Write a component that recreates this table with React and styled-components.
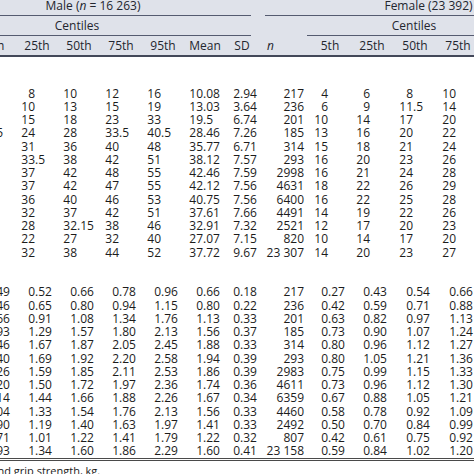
import React from "react"
import styled, { createGlobalStyle } from "styled-components"

// label | male n, 5th..95th, mean, sd | gap | female n, 5th..95th, mean, sd
const COLS =
	"100px 37px 42px 42px 42px 42px 42px 37px 32px 14px 42px 42px 43px 43px 43px 43px 38px 33px"

const ages = ["4", "5", "6", "7", "8", "9", "10", "11", "12", "13", "14", "15", "All"]

const absolute = [
	["5", "8", "10", "12", "16", "10.08", "2.94", "217", "4", "6", "8", "10"],
	["7", "10", "13", "15", "19", "13.03", "3.64", "236", "6", "9", "11.5", "14"],
	["11", "15", "18", "23", "33", "19.5", "6.74", "201", "10", "14", "17", "20"],
	["18.5", "24", "28", "33.5", "40.5", "28.46", "7.26", "185", "13", "16", "20", "22"],
	["24", "31", "36", "40", "48", "35.77", "6.71", "314", "15", "18", "21", "24"],
	["27", "33.5", "38", "42", "51", "38.12", "7.57", "293", "16", "20", "23", "26"],
	["30", "37", "42", "48", "55", "42.46", "7.59", "2998", "16", "21", "24", "28"],
	["30", "37", "42", "47", "55", "42.12", "7.56", "4631", "18", "22", "26", "29"],
	["29", "36", "40", "46", "53", "40.75", "7.56", "6400", "16", "22", "25", "28"],
	["26", "32", "37", "42", "51", "37.61", "7.66", "4491", "14", "19", "22", "26"],
	["22", "28", "32.15", "38", "46", "32.91", "7.32", "2521", "12", "17", "20", "23"],
	["17", "22", "27", "32", "40", "27.07", "7.15", "820", "10", "14", "17", "20"],
	["24", "32", "38", "44", "52", "37.72", "9.67", "23 307", "14", "20", "23", "27"],
]

const relative = [
	["0.49", "0.52", "0.66", "0.78", "0.96", "0.66", "0.18", "217", "0.27", "0.43", "0.54", "0.66"],
	["0.46", "0.65", "0.80", "0.94", "1.15", "0.80", "0.22", "236", "0.42", "0.59", "0.71", "0.88"],
	["0.66", "0.91", "1.08", "1.34", "1.76", "1.13", "0.33", "201", "0.63", "0.82", "0.97", "1.13"],
	["0.93", "1.29", "1.57", "1.80", "2.13", "1.56", "0.37", "185", "0.73", "0.90", "1.07", "1.24"],
	["1.46", "1.67", "1.87", "2.05", "2.45", "1.88", "0.33", "314", "0.80", "0.96", "1.12", "1.27"],
	["1.40", "1.69", "1.92", "2.20", "2.58", "1.94", "0.39", "293", "0.80", "1.05", "1.21", "1.36"],
	["1.26", "1.59", "1.85", "2.11", "2.53", "1.86", "0.39", "2983", "0.75", "0.99", "1.15", "1.33"],
	["1.20", "1.50", "1.72", "1.97", "2.36", "1.74", "0.36", "4611", "0.73", "0.96", "1.12", "1.30"],
	["1.14", "1.44", "1.66", "1.88", "2.26", "1.67", "0.34", "6359", "0.67", "0.88", "1.05", "1.21"],
	["1.04", "1.33", "1.54", "1.76", "2.13", "1.56", "0.33", "4460", "0.58", "0.78", "0.92", "1.09"],
	["0.90", "1.19", "1.40", "1.63", "1.97", "1.41", "0.33", "2492", "0.50", "0.70", "0.84", "0.99"],
	["0.71", "1.01", "1.22", "1.41", "1.79", "1.22", "0.32", "807", "0.42", "0.61", "0.75", "0.92"],
	["0.93", "1.34", "1.60", "1.86", "2.29", "1.60", "0.41", "23 158", "0.59", "0.84", "1.02", "1.20"],
]

const sections = [
	{ title: "Grip strength, kg", rows: absolute },
	{ title: "Relative grip strength", rows: relative },
]

// grid column of each value in a data row (col 10 is the gap between sexes)
const valueCols = [3, 4, 5, 6, 7, 8, 9, 11, 12, 13, 14, 15]

const Decimal = ({ value, col }) => {
	const [int, frac] = value.split(".")
	return (
		<Num $col={col}>
			<Int>{int}</Int>
			{frac && <span>.{frac}</span>}
		</Num>
	)
}

const App = () => (
	<Frame>
		<GlobalStyle />
		<Table>
			<Head>
				<HeadRow>
					<Group $span="2 / 10">
						Male (<i>n</i> = 16 263)
					</Group>
					<Group $span="11 / 19">Female (23 392)</Group>
				</HeadRow>
				<HeadRow>
					<Group $span="3 / 8">Centiles</Group>
					<Group $span="8 / 10" />
					<Group $span="12 / 17">Centiles</Group>
					<Group $span="17 / 19" />
				</HeadRow>
				<LabelRow>
					{["male", "female"].map((sex, i) => (
						<React.Fragment key={sex}>
							<CountLabel $col={2 + i * 9}>n</CountLabel>
							{["5th", "25th", "50th", "75th", "95th", "Mean", "SD"].map((l, j) => (
								<ColLabel key={l} $col={3 + j + i * 9}>
									<span>{l}</span>
								</ColLabel>
							))}
						</React.Fragment>
					))}
				</LabelRow>
			</Head>
			<Body>
				{sections.map((section) => (
					<React.Fragment key={section.title}>
						<Row />
						<Row>
							<Label>{section.title}</Label>
						</Row>
						{section.rows.map((row, r) => (
							<Row key={r}>
								<Label>{ages[r]}</Label>
								{row.map((v, c) =>
									c === 7 ? (
										<Count key={c} $col={valueCols[c]}>
											{v}
										</Count>
									) : (
										<Decimal key={c} value={v} col={valueCols[c]} />
									)
								)}
							</Row>
						))}
					</React.Fragment>
				))}
			</Body>
			<Note>Reference values for hand grip strength, kg.</Note>
		</Table>
	</Frame>
)

export default App

const GlobalStyle = createGlobalStyle`
	html, body {
		margin: 0;
		padding: 0;
		background: #fff;
		overflow: hidden;
	}
	body {
		font-family: "Open Sans", "Noto Sans", "Liberation Sans", sans-serif;
		color: #1c1c1c;
	}
`

const Frame = styled.div`
	width: 474px;
	height: 474px;
	overflow: hidden;
`

const Table = styled.div`
	width: 757px;
	margin: -4px 0 0 -165px;
`

const Head = styled.div`
	background: #dfe2ea;
	border-bottom: 2px solid #434859;
	color: #23262f;
	font-size: 12px;
`

const HeadRow = styled.div`
	display: grid;
	grid-template-columns: ${COLS};
	height: 20px;
`

const Group = styled.div`
	grid-column: ${(p) => p.$span};
	box-sizing: border-box;
	height: 20px;
	line-height: 19px;
	text-align: center;
	white-space: nowrap;
	border-bottom: 1px solid #555b70;
`

const LabelRow = styled.div`
	display: grid;
	grid-template-columns: ${COLS};
	height: 19px;
	line-height: 19px;
`

const ColLabel = styled.div`
	grid-column: ${(p) => p.$col};
	display: flex;

	span {
		flex: none;
		width: 46px;
		text-align: center;
	}
`

const CountLabel = styled.div`
	grid-column: ${(p) => p.$col};
	padding-left: 2px;
	font-style: italic;
`

const Body = styled.div`
	padding-top: 3px;
	border-bottom: 3px double #4a4a4a;
`

const Row = styled.div`
	display: grid;
	grid-template-columns: ${COLS};
	height: 13.25px;
	line-height: 13.25px;
	font-size: 12px;
	white-space: nowrap;
`

const Label = styled.div`
	grid-column: 1;
`

const Num = styled.div`
	grid-column: ${(p) => p.$col};
	display: flex;
`

const Int = styled.span`
	flex: none;
	width: 21px;
	text-align: right;
`

const Count = styled.div`
	grid-column: ${(p) => p.$col};
	text-align: right;
	padding-right: 3px;
`

const Note = styled.p`
	margin: 0;
	padding: 4px 0 0 42px;
	font-size: 11px;
	line-height: 12px;
	white-space: nowrap;
`
